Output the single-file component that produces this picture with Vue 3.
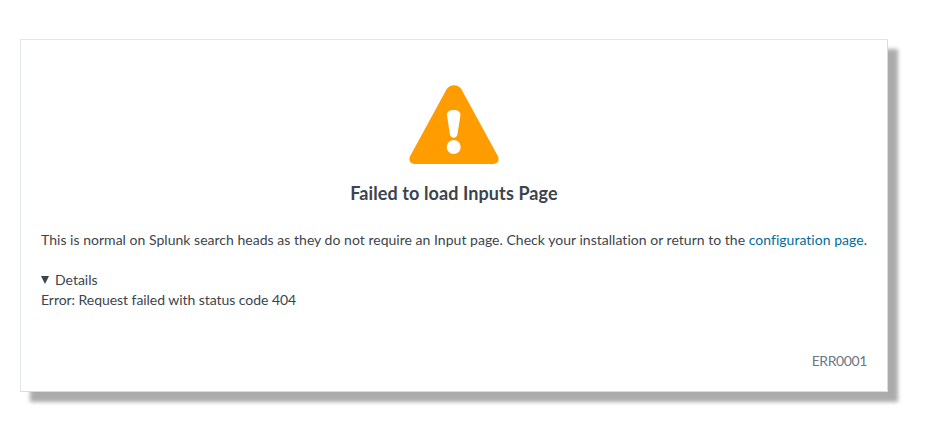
<template>
  <div class="page">
    <div class="error-card">
      <svg class="warning-icon" width="90" height="79" viewBox="0 0 90 79">
        <path
          fill="#ff9c00"
          d="M37.6 4.3C41 -1.2 49 -1.2 52.4 4.3L88.8 71C90.8 75 88.8 79 84.6 79H5.4C1.2 79 -0.8 75 1.2 71Z"
        />
        <path
          fill="#fff"
          d="M38 30.5C37.6 26.8 40.5 25 44.7 25C48.9 25 51.8 26.8 51.4 30.5L48.6 48.5C48.2 51.5 46.6 52.8 44.7 52.8C42.8 52.8 41.2 51.5 40.8 48.5Z"
        />
        <circle cx="44.7" cy="62" r="7" fill="#fff" />
      </svg>

      <h2 class="title">Failed to load Inputs Page</h2>

      <p class="message">
        This is normal on Splunk search heads as they do not require an Input page. Check your
        installation or return to the <a class="link" href="#">configuration page</a>.
      </p>

      <div class="details">
        <div class="summary"><span class="arrow"></span>Details</div>
        <div class="error-line">Error: Request failed with status code 404</div>
      </div>

      <div class="code">ERR0001</div>
    </div>
  </div>
</template>

<script setup>
</script>

<style>
html,
body {
  background: #fff;
}
</style>

<style scoped>
.page {
  width: 936px;
  height: 426px;
  box-sizing: border-box;
  padding: 39px 48px 0 20px;
  overflow: hidden;
  font-family: Lato, "Liberation Sans", sans-serif;
  font-size: 14px;
  color: #3c444d;
}

.error-card {
  height: 353px;
  box-sizing: border-box;
  padding: 45px 20px 0 20px;
  background: #fff;
  border: 1px solid #e1e6eb;
  border-bottom-color: #dcdcdc;
  border-right-color: #dcdcdc;
  box-shadow: 10px 10px 4px rgba(0, 0, 0, 0.33);
  display: flex;
  flex-direction: column;
}

.warning-icon {
  align-self: center;
  flex-shrink: 0;
}

.title {
  margin: 19px 0 0;
  font-size: 18px;
  line-height: 20px;
  font-weight: 700;
  letter-spacing: 0.1px;
  text-align: center;
}

.message {
  margin: 27px 0 0;
  line-height: 20px;
  letter-spacing: 0.025px;
  white-space: nowrap;
}

.link {
  color: #006d9c;
  text-decoration: none;
}

.details {
  margin-top: 20px;
  line-height: 20px;
}

.summary {
  display: flex;
  align-items: center;
}

.arrow {
  width: 0;
  height: 0;
  margin-right: 6px;
  border-left: 4.5px solid transparent;
  border-right: 4.5px solid transparent;
  border-top: 8px solid #3c444d;
}

.error-line {
  letter-spacing: -0.05px;
}

.code {
  margin-top: auto;
  margin-bottom: 20px;
  text-align: right;
  line-height: 20px;
  letter-spacing: -0.4px;
  color: #6b7785;
}
</style>
